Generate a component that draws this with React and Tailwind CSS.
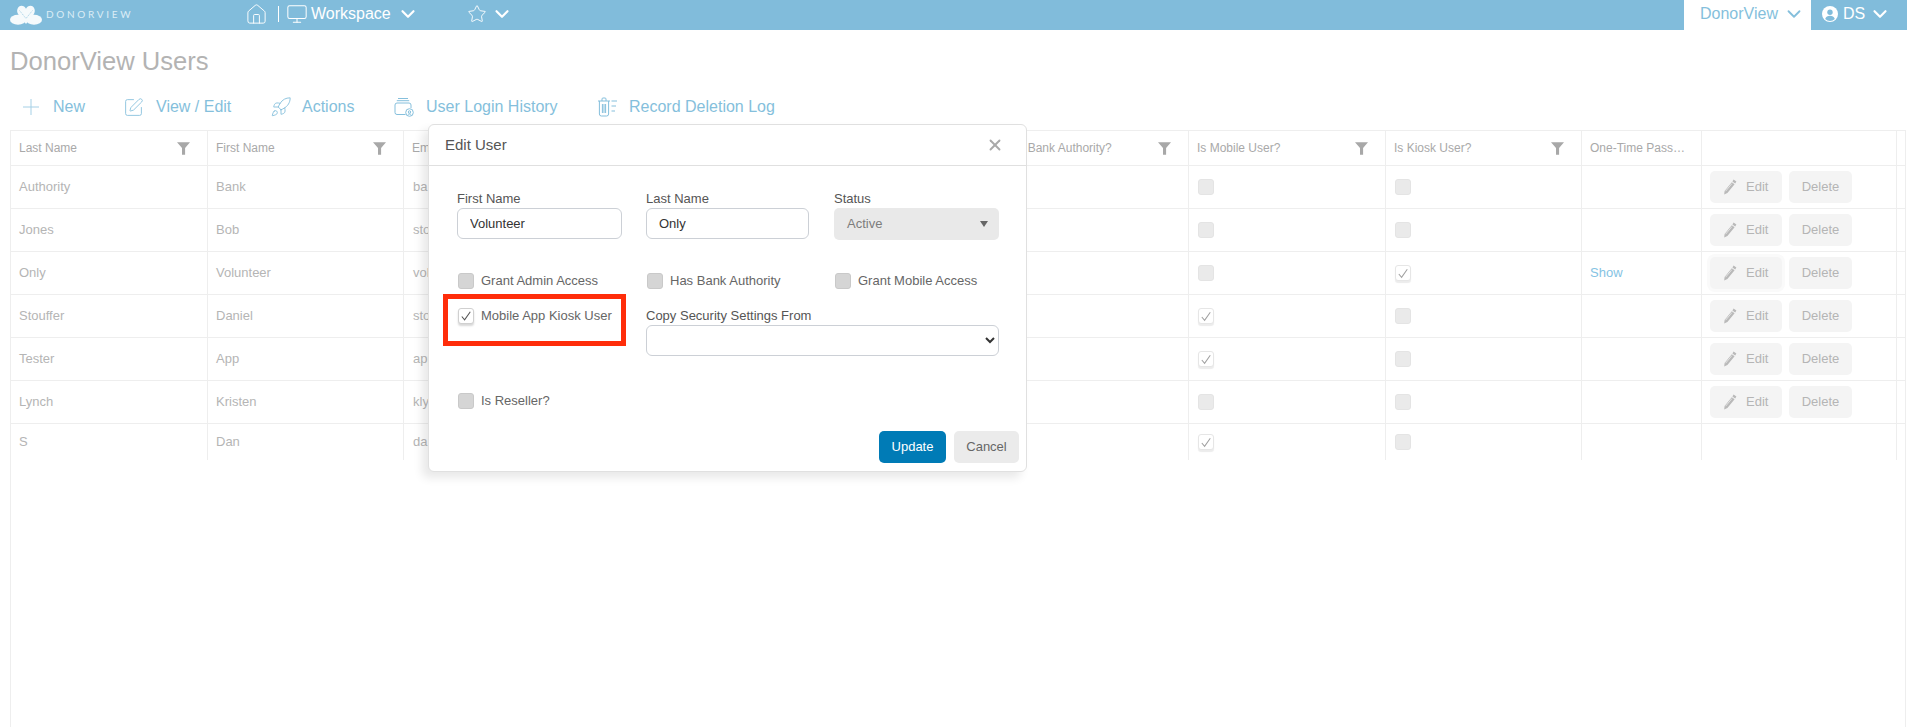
import React from "react";
import { ChevronDown, House, Monitor, Rocket, SquarePen, Star, X } from "lucide-react";

const rowClass =
  "grid grid-cols-[197px_196px_198px_198px_195px_194px_197px_196px_120px_195px] border-b border-[#eeeeee]";
const cellClass = "flex items-center border-r border-[#eeeeee] pl-[8px]";

const users = [
  { last: "Authority", first: "Bank", email: "ba", mobile: false, kiosk: false },
  { last: "Jones", first: "Bob", email: "sto", mobile: false, kiosk: false },
  { last: "Only", first: "Volunteer", email: "vol", mobile: false, kiosk: true, show: true, focus: true },
  { last: "Stouffer", first: "Daniel", email: "sto", mobile: true, kiosk: false },
  { last: "Tester", first: "App", email: "app", mobile: true, kiosk: false },
  { last: "Lynch", first: "Kristen", email: "kly", mobile: false, kiosk: false },
  { last: "S", first: "Dan", email: "da", mobile: true, kiosk: false, noActions: true },
];

const Funnel = () => (
  <svg viewBox="0 0 13 13" className="ml-auto h-[13px] w-[13px] fill-[#a8a8a8]">
    <path d="M0 .3h13L8.1 6v6.7H5V6z" />
  </svg>
);

const HeadCell = ({ label, filter }) => (
  <div className={`${cellClass} pr-[17px] text-[12px] text-[#a9a9a9]`}>
    <span className="whitespace-nowrap">{label}</span>
    {filter && <Funnel />}
  </div>
);

const Check = ({ className }) => (
  <svg viewBox="0 0 16 16" className={className} fill="none">
    <path d="M3.2 8.6 6.4 12.4 12.9 3.2" />
  </svg>
);

const TableCheck = ({ checked }) =>
  checked ? (
    <span className="flex h-[16px] w-[16px] items-center justify-center rounded-[3px] border border-[#e6e6e6] bg-white shadow-[0_2px_1px_#ececec]">
      <Check className="h-[15px] w-[15px] stroke-[#a0a0a0] stroke-[1.2]" />
    </span>
  ) : (
    <span className="h-[16px] w-[16px] rounded-[3px] border border-[#e4e4e4] bg-[#eaeaea]" />
  );

const FormCheck = ({ checked }) =>
  checked ? (
    <span className="flex h-[16px] w-[16px] shrink-0 items-center justify-center rounded-[3px] border border-[#d0d0d0] bg-white shadow-[0_2px_2px_#d8d8d8]">
      <Check className="h-[16px] w-[16px] stroke-[#555555] stroke-[1.2]" />
    </span>
  ) : (
    <span className="h-[16px] w-[16px] shrink-0 rounded-[3px] border border-[#c9c9c9] bg-[#d5d5d5]" />
  );

const CheckLabel = ({ label, checked }) => (
  <label className="flex h-[16px] items-center gap-[7px] pl-[1px] text-[13px] whitespace-nowrap text-[#666666]">
    <FormCheck checked={checked} />
    {label}
  </label>
);

const EditPencil = () => (
  <svg viewBox="0 0 14 16" className="h-[16px] w-[14px] fill-[#b9b9b9]">
    <path d="M10.6.6 13.4 2.6 12.2 4.4 9.4 2.4zM8.8 3.2 11.6 5.2 4.4 14 1.2 15.6 1.6 12z" />
    <path d="M2.6 12.2 8.9 4.6" stroke="#f4f4f4" strokeWidth=".7" />
  </svg>
);

const WalletUser = () => (
  <svg viewBox="0 0 20 20" className="h-[20px] w-[20px]" fill="none" stroke="#85bfdc" strokeWidth="1">
    <path d="M4 1.500h10M2.800 3.700h12.400" />
    <path d="M11.500 17.500H3a2 2 0 0 1-2-2V8a2 2 0 0 1 2-2h12a2 2 0 0 1 2 2v3" />
    <circle cx="15.500" cy="15.500" r="3.800" />
    <circle cx="15.500" cy="15" r="1.200" />
    <path d="M13.700 17.800c.4-1 3.200-1 3.600 0" />
  </svg>
);

const TrashLog = () => (
  <svg viewBox="0 0 20 20" className="h-[20px] w-[20px]" fill="none" stroke="#85bfdc" strokeWidth="1">
    <path d="M1 4h12M5 4V2a1 1 0 0 1 1-1h2a1 1 0 0 1 1 1v2" />
    <path d="M2.400 4v13a2 2 0 0 0 2 2h5.200a2 2 0 0 0 2-2V4" />
    <path d="M5.400 7v9M7 7v9M8.600 7v9" />
    <path d="M14.500 4H20M14.500 9H19M14.500 14H18" />
  </svg>
);

const Logo = () => (
  <svg viewBox="0 0 32 20" className="h-[20px] w-[32px]">
    <ellipse cx="8" cy="14.800" rx="8" ry="5" fill="#f6fafc" />
    <ellipse cx="24" cy="14.800" rx="8" ry="5" fill="#f6fafc" />
    <path d="M16 19 8.400 9.400C5.600 5.600 8 .8 11.400 .8c2.200 0 3.600 1.200 4.600 3 1-1.800 2.400-3 4.600-3 3.400 0 5.800 4.800 3 8.600z" fill="#f6fafc" />
    <path d="M9.500 5.500 16 13.500l6.500-8" fill="none" stroke="#a9d2e6" strokeWidth=".9" strokeDasharray="1.400 .8" />
  </svg>
);

const UserCircle = () => (
  <svg viewBox="0 0 16 16" className="h-[16px] w-[16px]">
    <circle cx="8" cy="8" r="8" fill="#ffffff" />
    <circle cx="8" cy="6.200" r="2.700" fill="#81bcdb" />
    <path d="M3.200 13c.6-2.400 2.600-3.300 4.800-3.300s4.200.9 4.800 3.300A7 7 0 0 1 8 15a7 7 0 0 1-4.800-2z" fill="#81bcdb" />
  </svg>
);

const ToolItem = ({ icon, label, className }) => (
  <div className={`flex items-center whitespace-nowrap ${className}`}>
    {icon}
    {label}
  </div>
);

const EditUserModal = () => (
  <div className="absolute top-[124px] left-[428px] w-[599px] rounded-[6px] border border-[#e0e0e0] bg-white shadow-[-6px_6px_10px_rgba(0,0,0,0.09)]">
    <div className="flex h-[41px] items-center border-b border-[#e0e0e0] pr-[22px] pl-[16px] text-[15px] text-[#555555]">
      Edit User
      <X className="ml-auto h-[18px] w-[18px] text-[#a9a9a9]" strokeWidth={2.5} />
    </div>
    <div className="pt-[25px] pr-[27px] pl-[28px]">
      <div className="grid grid-cols-[189px_188px_165px]">
        <div className="w-[165px]">
          <div className="h-[17px] text-[13px] leading-[16px] text-[#555555]">First Name</div>
          <input readOnly value="Volunteer" className="h-[31px] w-full rounded-[6px] border border-[#ccd0d6] pl-[12px] text-[13px] text-[#333333] outline-none" />
        </div>
        <div className="w-[163px]">
          <div className="h-[17px] text-[13px] leading-[16px] text-[#555555]">Last Name</div>
          <input readOnly value="Only" className="h-[31px] w-full rounded-[6px] border border-[#ccd0d6] pl-[12px] text-[13px] text-[#333333] outline-none" />
        </div>
        <div>
          <div className="h-[17px] text-[13px] leading-[16px] text-[#555555]">Status</div>
          <div className="flex h-[32px] items-center rounded-[5px] bg-[#e9e9e9] pr-[11px] pl-[13px] text-[13px] text-[#7d7d7d]">
            Active
            <span className="ml-auto h-0 w-0 border-x-[4px] border-t-[6px] border-x-transparent border-t-[#666666]" />
          </div>
        </div>
      </div>

      <div className="mt-[33px] grid grid-cols-[189px_188px_165px]">
        <CheckLabel label="Grant Admin Access" />
        <CheckLabel label="Has Bank Authority" />
        <CheckLabel label="Grant Mobile Access" />
      </div>

      <div className="mt-[19px] grid grid-cols-[189px_353px]">
        <CheckLabel label="Mobile App Kiosk User" checked />
        <div>
          <div className="h-[17px] text-[13px] leading-[16px] text-[#555555]">Copy Security Settings From</div>
          <select className="h-[31px] w-full rounded-[6px] border border-[#ccd0d6] bg-white text-[13px] text-[#333333] outline-none">
            <option value=""></option>
          </select>
        </div>
      </div>

      <div className="mt-[37px]">
        <CheckLabel label="Is Reseller?" />
      </div>
    </div>
    <div className="mt-[22px] flex justify-end gap-[8px] pr-[7px] pb-[8px]">
      <button className="h-[32px] w-[67px] rounded-[5px] bg-[#007bb6] text-[13px] text-white">Update</button>
      <button className="h-[32px] w-[65px] rounded-[5px] bg-[#ebebeb] text-[13px] text-[#666666]">Cancel</button>
    </div>
    <div className="absolute top-[169px] left-[14px] h-[52px] w-[183px] border-[5px] border-[#ff2d0a]" />
  </div>
);

export default function App() {
  return (
    <div className="relative flex h-screen flex-col overflow-hidden bg-white font-['Liberation_Sans',Arial,sans-serif]">
      <header className="flex h-[30px] shrink-0 items-center bg-[#81bcdb] text-[16px] text-white">
        <div className="flex h-full items-center pb-[2px]">
          <div className="flex w-[245px] items-center pt-[1px] pl-[10px]">
            <Logo />
            <span className="ml-[4px] font-['Lato',sans-serif] text-[10px] tracking-[2.7px] text-[#dcedf6]">DONORVIEW</span>
          </div>
          <House className="h-[23px] w-[23px]" strokeWidth={1} />
          <span className="ml-[10px] h-[16px] w-px bg-white" />
          <Monitor className="ml-[7px] h-[22px] w-[22px]" strokeWidth={1.1} />
          <span className="ml-[3px]">Workspace</span>
          <ChevronDown className="ml-[6px] h-[22px] w-[22px]" strokeWidth={2.4} />
          <Star className="ml-[48px] h-[20px] w-[20px]" strokeWidth={1.1} />
          <ChevronDown className="ml-[4px] h-[22px] w-[22px]" strokeWidth={2.4} />
        </div>
        <div className="ml-auto flex h-full w-[127px] items-center bg-white pb-[2px] pl-[16px] text-[#85bfdc]">
          DonorView
          <ChevronDown className="ml-[5px] h-[22px] w-[22px]" strokeWidth={2} />
        </div>
        <div className="flex h-full w-[96px] items-center pb-[2px] pl-[11px]">
          <UserCircle />
          <span className="ml-[5px]">DS</span>
          <ChevronDown className="ml-[4px] h-[22px] w-[22px]" strokeWidth={2.4} />
        </div>
      </header>

      <h1 className="mt-[16px] ml-[10px] text-[25.6px] leading-[30px] font-normal text-[#b3b3b3]">DonorView Users</h1>

      <div className="mt-[15px] flex h-[32px] items-center pl-[23px] text-[16px] text-[#85bfdc]">
        <ToolItem
          className="w-[100px]"
          label="New"
          icon={
            <svg viewBox="0 0 16 16" className="mr-[14px] h-[16px] w-[16px]" stroke="#a5d0e6" strokeWidth="1">
              <path d="M8 0v16M0 8h16" />
            </svg>
          }
        />
        <ToolItem className="w-[147px]" label="View / Edit" icon={<SquarePen className="mr-[12px] h-[21px] w-[21px]" strokeWidth={1} />} />
        <ToolItem className="w-[124px]" label="Actions" icon={<Rocket className="mr-[10px] h-[22px] w-[22px]" strokeWidth={1} />} />
        <ToolItem className="w-[203px]" label="User Login History" icon={<span className="mr-[12px]"><WalletUser /></span>} />
        <ToolItem label="Record Deletion Log" icon={<span className="mr-[12px]"><TrashLog /></span>} />
      </div>

      <div className="mt-[7px] ml-[10px] w-[1896px] flex-1 border-x border-t border-[#eeeeee]">
        <div className="flex h-[35px] border-b border-[#eeeeee]">
          <div className="grid grid-cols-[197px_196px_198px_198px_195px_194px_197px_196px_120px_195px]">
            <HeadCell label="Last Name" filter />
            <HeadCell label="First Name" filter />
            <HeadCell label="Em" />
            <HeadCell label="" />
            <HeadCell label="" />
            <HeadCell label="Has Bank Authority?" filter />
            <HeadCell label="Is Mobile User?" filter />
            <HeadCell label="Is Kiosk User?" filter />
            <HeadCell label="One-Time Pass…" />
            <HeadCell label="" />
          </div>
        </div>
        {users.map((user) => (
          <div key={user.last} className={`${rowClass} ${user.noActions ? "h-[36px] border-b-0" : "h-[43px]"} text-[13px] text-[#b5b5b5]`}>
            <div className={cellClass}>{user.last}</div>
            <div className={cellClass}>{user.first}</div>
            <div className={`${cellClass} pl-[9px]`}>{user.email}</div>
            <div className={cellClass} />
            <div className={cellClass} />
            <div className={cellClass} />
            <div className={`${cellClass} pl-[9px]`}><TableCheck checked={user.mobile} /></div>
            <div className={`${cellClass} pl-[9px]`}><TableCheck checked={user.kiosk} /></div>
            <div className={cellClass}>{user.show && <span className="text-[#85c3e3]">Show</span>}</div>
            <div className={`${cellClass} gap-[7px]`}>
              {!user.noActions && (
                <>
                  <button className={`flex h-[32px] w-[72px] items-center gap-[9px] rounded-[5px] bg-[#f4f4f4] pl-[13px] ${user.focus ? "shadow-[0_0_0_3px_#fafafa]" : ""}`}>
                    <EditPencil />
                    Edit
                  </button>
                  <button className="h-[32px] w-[63px] rounded-[5px] bg-[#f4f4f4]">Delete</button>
                </>
              )}
            </div>
          </div>
        ))}
      </div>

      <EditUserModal />
    </div>
  );
}
